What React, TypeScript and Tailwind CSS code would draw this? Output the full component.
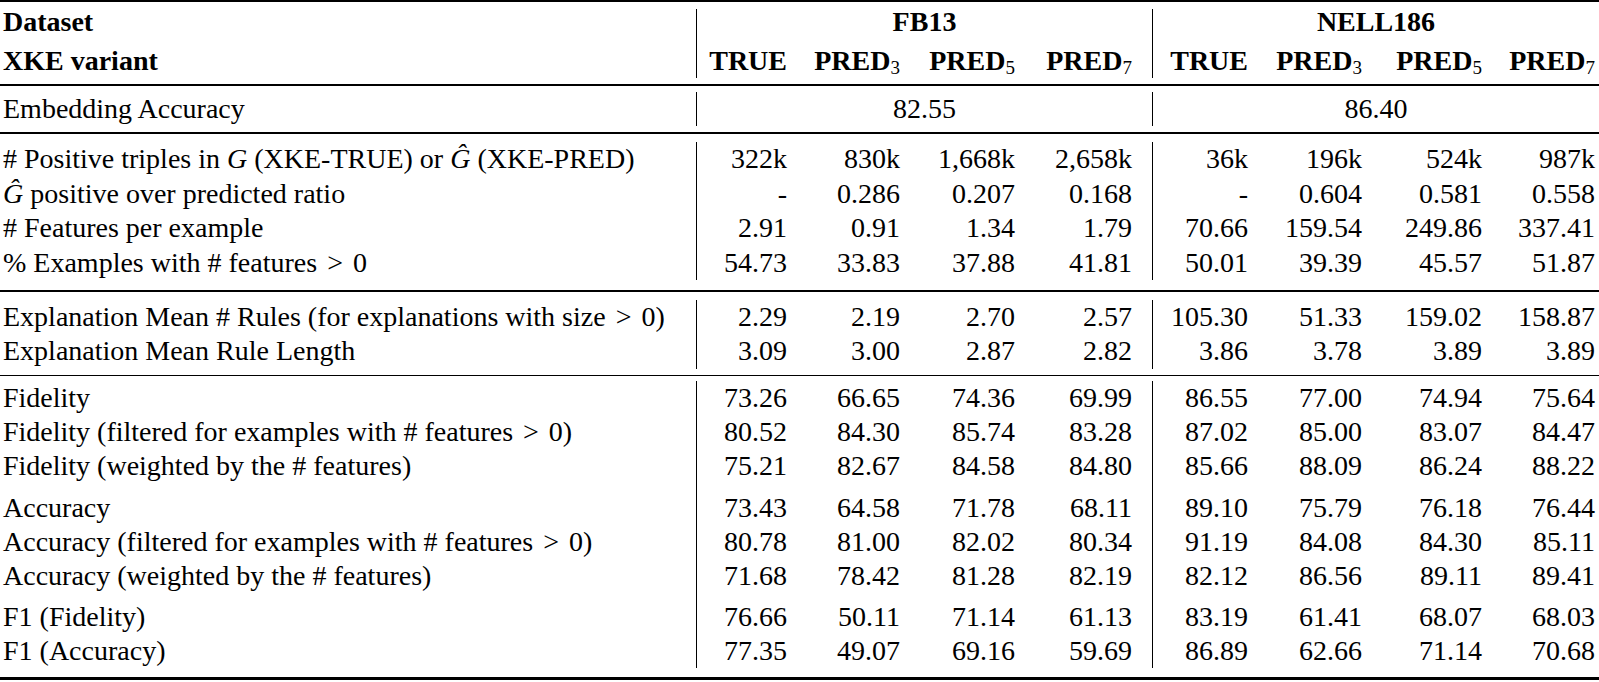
import React from 'react';

// column grid shared by every row of the table
const cols = 'grid grid-cols-[696px_101px_113px_115px_127px_106px_114px_120px_107px]';

const cellCls = [
    'text-right pr-[10px] border-l border-black',
    'text-right pr-[10px]',
    'text-right pr-[10px]',
    'text-right pr-[20px]',
    'text-right pr-[10px] border-l border-black',
    'text-right pr-[10px]',
    'text-right pr-[10px]',
    'text-right pr-[4px]',
];

// calligraphic G stand-in
const G = () => <span className="italic">G</span>;
const GHat = () => <span className="italic">Ĝ</span>;
// math-mode ">" is a bit wider than the text one
const Gt = () => <span className="px-[3px]">&gt;</span>;

function DataRow({ label, vals, tight }: { label: React.ReactNode; vals: string[]; tight?: boolean }) {
    return (
        <div className={`${cols} ${tight ? 'leading-[34px] h-[34px]' : 'leading-[34.5px] h-[34.5px]'}`}>
            <div className="pl-[3px] whitespace-nowrap">{label}</div>
            {vals.map((v, i) => (
                <div key={i} className={cellCls[i]}>{v}</div>
            ))}
        </div>
    );
}

function VSpacer({ h }: { h: string }) {
    return (
        <div className={`${cols} ${h}`}>
            <div />
            <div className="border-l border-black" />
            <div /><div /><div />
            <div className="border-l border-black" />
            <div /><div /><div />
        </div>
    );
}

const Pred = ({ n }: { n: string }) => (
    <>PRED<sub className="text-[0.68em] font-normal">{n}</sub></>
);

export default function App() {
    return (
        <div className="w-[1599px] bg-white text-black font-['Liberation_Serif'] text-[28px]">
            {/* toprule */}
            <div className="h-[2px] bg-black" />
            <div className="h-[7px]" />

            {/* header */}
            <div className={`${cols} leading-[26px] h-[34.5px] font-bold`}>
                <div className="pl-[3px]">Dataset</div>
                <div className="col-span-4 text-center border-l border-black">FB13</div>
                <div className="col-span-4 text-center border-l border-black">NELL186</div>
            </div>
            <div className={`${cols} leading-[34.5px] h-[34.5px] font-bold`}>
                <div className="pl-[3px]">XKE variant</div>
                <div className={cellCls[0]}>TRUE</div>
                <div className={cellCls[1]}><Pred n="3" /></div>
                <div className={cellCls[2]}><Pred n="5" /></div>
                <div className={cellCls[3]}><Pred n="7" /></div>
                <div className={cellCls[4]}>TRUE</div>
                <div className={cellCls[5]}><Pred n="3" /></div>
                <div className={cellCls[6]}><Pred n="5" /></div>
                <div className={cellCls[7]}><Pred n="7" /></div>
            </div>

            <div className="mt-[6px] mb-[6px] h-[1.5px] bg-black" />

            <div className={`${cols} leading-[34.5px] h-[34.5px]`}>
                <div className="pl-[3px]">Embedding Accuracy</div>
                <div className="col-span-4 text-center border-l border-black">82.55</div>
                <div className="col-span-4 text-center border-l border-black">86.40</div>
            </div>

            <div className="mt-[5.5px] mb-[8.5px] h-[2px] bg-black" />

            <DataRow
                label={<># Positive triples in <G /> (XKE-TRUE) or <GHat /> (XKE-PRED)</>}
                vals={['322k', '830k', '1,668k', '2,658k', '36k', '196k', '524k', '987k']}
            />
            <DataRow
                label={<><GHat /> positive over predicted ratio</>}
                vals={['-', '0.286', '0.207', '0.168', '-', '0.604', '0.581', '0.558']}
            />
            <DataRow
                label="# Features per example"
                vals={['2.91', '0.91', '1.34', '1.79', '70.66', '159.54', '249.86', '337.41']}
            />
            <DataRow
                label={<>% Examples with # features <Gt /> 0</>}
                vals={['54.73', '33.83', '37.88', '41.81', '50.01', '39.39', '45.57', '51.87']}
            />

            <div className="mt-[10px] mb-[8px] h-[1.5px] bg-black" />

            <DataRow
                label={<>Explanation Mean # Rules (for explanations with size <Gt /> 0)</>}
                vals={['2.29', '2.19', '2.70', '2.57', '105.30', '51.33', '159.02', '158.87']}
            />
            <DataRow
                label="Explanation Mean Rule Length"
                vals={['3.09', '3.00', '2.87', '2.82', '3.86', '3.78', '3.89', '3.89']}
            />

            <div className="mt-[6px] mb-[5px] h-[1.5px] bg-black" />

            <DataRow tight label="Fidelity" vals={['73.26', '66.65', '74.36', '69.99', '86.55', '77.00', '74.94', '75.64']} />
            <DataRow
                tight
                label={<>Fidelity (filtered for examples with # features <Gt /> 0)</>}
                vals={['80.52', '84.30', '85.74', '83.28', '87.02', '85.00', '83.07', '84.47']}
            />
            <DataRow
                tight
                label="Fidelity (weighted by the # features)"
                vals={['75.21', '82.67', '84.58', '84.80', '85.66', '88.09', '86.24', '88.22']}
            />
            <VSpacer h="h-[7.5px]" />
            <DataRow tight label="Accuracy" vals={['73.43', '64.58', '71.78', '68.11', '89.10', '75.79', '76.18', '76.44']} />
            <DataRow
                tight
                label={<>Accuracy (filtered for examples with # features <Gt /> 0)</>}
                vals={['80.78', '81.00', '82.02', '80.34', '91.19', '84.08', '84.30', '85.11']}
            />
            <DataRow
                tight
                label="Accuracy (weighted by the # features)"
                vals={['71.68', '78.42', '81.28', '82.19', '82.12', '86.56', '89.11', '89.41']}
            />
            <VSpacer h="h-[7.5px]" />
            <DataRow tight label="F1 (Fidelity)" vals={['76.66', '50.11', '71.14', '61.13', '83.19', '61.41', '68.07', '68.03']} />
            <DataRow tight label="F1 (Accuracy)" vals={['77.35', '49.07', '69.16', '59.69', '86.89', '62.66', '71.14', '70.68']} />

            {/* bottomrule */}
            <div className="mt-[9px] h-[2.5px] bg-black" />
        </div>
    );
}
